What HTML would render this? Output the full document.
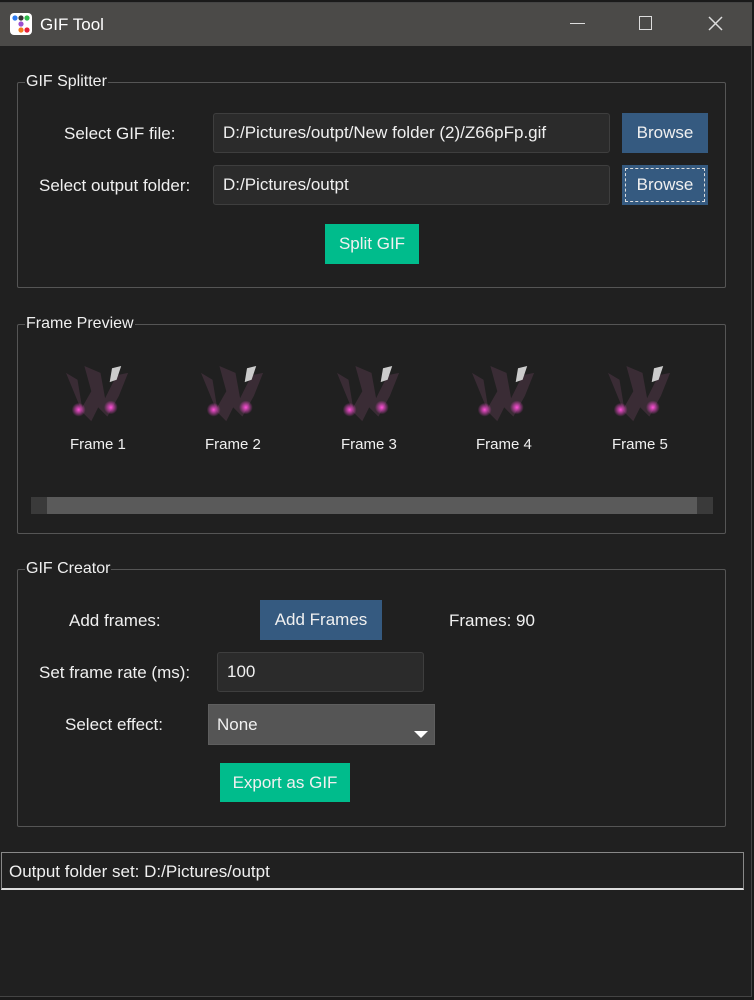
<!DOCTYPE html>
<html><head><meta charset="utf-8"><style>
*{box-sizing:border-box;margin:0;padding:0}
body{width:754px;height:1000px;background:#1a1a1a;font-family:"Liberation Sans",sans-serif;color:#f0f0f0;position:relative;overflow:hidden;font-size:17px}
.win{position:absolute;left:-1px;top:2px;width:753px;height:995px;background:#202020;border:1px solid #444}
.title{position:absolute;left:0;top:0;width:752px;height:43px;background:#4b4a48}
.a{position:absolute;white-space:nowrap}
.grp{position:absolute;border:1px solid #555;border-radius:2px}
.lg{position:absolute;background:#202020;padding:0 1px;font-size:16px;top:-10px;left:7px;line-height:18px}
.inp{position:absolute;background:#2b2b2b;border:1px solid #3e3e3e;border-radius:3px;padding-left:9px;line-height:38px;font-size:17px}
.btn{position:absolute;background:#355a80;text-align:center;font-size:17px}
.grn{position:absolute;background:#00bc8c;text-align:center;font-size:17px}
</style></head><body>
<div class="win">
<div class="title">
 <svg class="a" style="left:9px;top:9px" width="24" height="24" viewBox="0 0 24 24"><rect x="1" y="1" width="22" height="22" rx="4" fill="#fff"/><circle cx="6" cy="6" r="2.6" fill="#2e7bf0"/><circle cx="12" cy="6" r="2.6" fill="#333"/><circle cx="18" cy="6" r="2.6" fill="#2db84a"/><circle cx="12" cy="12" r="2.6" fill="#9b4fd0"/><circle cx="12" cy="18" r="2.6" fill="#f57c1f"/><circle cx="18" cy="18" r="2.6" fill="#e8203a"/></svg>
 <div class="a" style="left:40px;top:12px;font-size:17px;color:#fff">GIF Tool</div>
 <div class="a" style="left:570px;top:20px;width:15px;height:1px;background:#ddd"></div>
 <div class="a" style="left:639px;top:13px;width:13px;height:14px;border:1.5px solid #ddd"></div>
 <svg class="a" style="left:708px;top:13px" width="15" height="15"><path d="M1 1L14 14M14 1L1 14" stroke="#ddd" stroke-width="1.5"/></svg>
</div>

<div class="grp" style="left:17px;top:79px;width:709px;height:206px"><div class="lg">GIF Splitter</div></div>
<div class="a" style="left:64px;top:121px">Select GIF file:</div>
<div class="inp" style="left:213px;top:110px;width:397px;height:40px">D:/Pictures/outpt/New folder (2)/Z66pFp.gif</div>
<div class="btn" style="left:622px;top:110px;width:86px;height:40px;line-height:40px">Browse</div>
<div class="a" style="left:39px;top:173px">Select output folder:</div>
<div class="inp" style="left:213px;top:162px;width:397px;height:40px">D:/Pictures/outpt</div>
<div class="btn" style="left:622px;top:162px;width:86px;height:40px;line-height:40px;outline:1.5px dashed #ddd;outline-offset:-4px">Browse</div>
<div class="grn" style="left:325px;top:221px;width:94px;height:40px;line-height:40px">Split GIF</div>

<div class="grp" style="left:17px;top:321px;width:709px;height:210px"><div class="lg">Frame Preview</div></div>
<div class="a" style="left:31px;top:494px;width:682px;height:17px;background:#3a3a3a"></div>
<div class="a" style="left:47px;top:494px;width:650px;height:17px;background:#5a5a5a"></div>

<div class="grp" style="left:17px;top:566px;width:709px;height:258px"><div class="lg">GIF Creator</div></div>
<div class="a" style="left:69px;top:608px">Add frames:</div>
<div class="btn" style="left:260px;top:597px;width:122px;height:40px;line-height:40px">Add Frames</div>
<div class="a" style="left:449px;top:608px">Frames: 90</div>
<div class="a" style="left:39px;top:660px">Set frame rate (ms):</div>
<div class="inp" style="left:217px;top:649px;width:207px;height:40px">100</div>
<div class="a" style="left:65px;top:712px">Select effect:</div>
<div class="a" style="left:208px;top:701px;width:227px;height:41px;background:#555;border:1px solid #5e5e5e;padding-left:8px;line-height:40px">None</div>
<svg class="a" style="left:414px;top:728px" width="14" height="8"><path d="M0 0H14L7 7Z" fill="#fff"/></svg>
<div class="grn" style="left:220px;top:760px;width:130px;height:39px;line-height:39px">Export as GIF</div>

<div class="a" style="left:1px;top:849px;width:743px;height:38px;border:1px solid #888;border-bottom:2px solid #ddd;padding-left:7px;line-height:37px">Output folder set: D:/Pictures/outpt</div>
</div>
<svg style="position:absolute;left:0;top:0" width="754" height="460">
<defs><radialGradient id="g"><stop offset="0" stop-color="#ff4fd8"/><stop offset="1" stop-color="#ff4fd8" stop-opacity="0"/></radialGradient></defs>
<g id="f" transform="translate(66,366) scale(1.15)">
<path d="M0 6L10 12L14 36L22 22L16 0L30 6L34 28L44 8L54 6L46 26L36 44L28 36L22 48L14 40Z" fill="#3a2c35"/>
<path d="M40 2L48 0L44 12L38 14Z" fill="#ccc"/>
<circle cx="11" cy="38" r="6" fill="url(#g)"/><circle cx="39" cy="36" r="6" fill="url(#g)"/>
</g>
<use href="#f" x="135"/><use href="#f" x="271"/><use href="#f" x="406"/><use href="#f" x="542"/>
</svg>
<div class="a" style="left:70px;top:436px;font-size:15px">Frame 1</div>
<div class="a" style="left:205px;top:436px;font-size:15px">Frame 2</div>
<div class="a" style="left:341px;top:436px;font-size:15px">Frame 3</div>
<div class="a" style="left:476px;top:436px;font-size:15px">Frame 4</div>
<div class="a" style="left:612px;top:436px;font-size:15px">Frame 5</div>
</body></html>
